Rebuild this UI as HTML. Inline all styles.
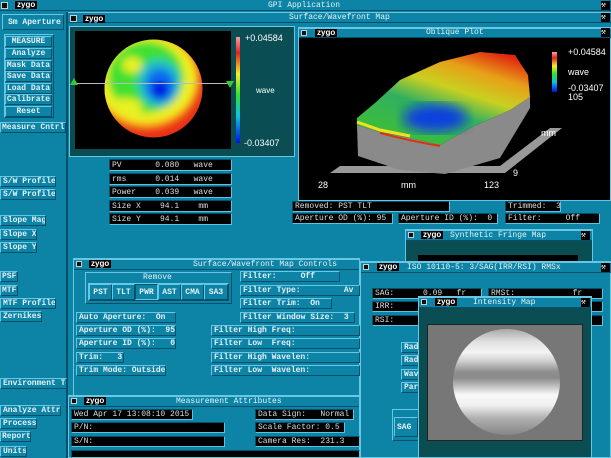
<!DOCTYPE html>
<html><head><meta charset="utf-8"><style>
*{margin:0;padding:0;box-sizing:border-box}
body{width:611px;height:458px;overflow:hidden;background:#0d84a6;font-family:"Liberation Mono",monospace;font-size:8px;color:#e6f2f6;position:relative}
div{position:absolute}
.b{border:1px solid;border-color:#66c8e4 #04506a #04506a #66c8e4;background:#0d84a6;white-space:pre;padding-left:2px;font-weight:bold;overflow:hidden;display:flex;align-items:center}
.c{justify-content:center;padding:0}
.f{background:#000;color:#ddd;border:1px solid;border-color:#04506a #5cc3e0 #5cc3e0 #04506a;white-space:pre;padding-left:2px;overflow:hidden;display:flex;align-items:center}
.t{height:11px;background:#0d84a6;border-top:1px solid #66c8e4;border-bottom:1px solid #04506a;white-space:pre;line-height:9px}
.z{background:#000;color:#fff;font-family:"Liberation Sans",sans-serif;font-weight:bold;font-size:8px;line-height:8px;padding:0 2px;height:8px;top:1px}
.x{width:7px;height:7px;background:#111;border:1px solid #ccc;top:2px}
.w{border:1px solid;border-color:#66c8e4 #04506a #04506a #66c8e4}
.s{color:#fff;font-family:"Liberation Sans",sans-serif;font-size:9px;white-space:pre}
.k{width:9px;height:9px;background:#000;color:#fff;font-size:8px;line-height:9px}
</style></head><body>
<!-- top bar -->
<div class="t" style="left:0;top:0;width:611px;border-top:none"></div>
<div class="x" style="left:1px"></div><div class="z" style="left:15px">zygo</div>
<div style="left:268px;top:1px;white-space:pre">GPI Application</div>
<div class="k" style="left:601px;top:1px">⚒</div>

<!-- left column -->
<div style="left:66px;top:12px;width:2px;height:446px;background:#04506a"></div>
<div class="b" style="left:2px;top:14px;width:62px;height:16px;padding-left:5px">Sm Aperture</div>
<div class="w" style="left:4px;top:34px;width:50px;height:84px"></div>
<div class="b c" style="left:5px;top:36px;width:47px;height:11px">MEASURE</div>
<div class="b c" style="left:5px;top:48px;width:47px;height:11px">Analyze</div>
<div class="b c" style="left:5px;top:60px;width:47px;height:11px">Mask Data</div>
<div class="b c" style="left:5px;top:71px;width:47px;height:11px">Save Data</div>
<div class="b c" style="left:5px;top:83px;width:47px;height:11px">Load Data</div>
<div class="b c" style="left:5px;top:94px;width:47px;height:11px">Calibrate</div>
<div class="b c" style="left:5px;top:106px;width:47px;height:11px">Reset</div>
<div class="b" style="left:0;top:122px;width:66px;height:11px;padding-left:1px">Measure Cntrl</div>
<div class="b" style="left:0;top:176px;width:56px;height:11px">S/W Profile</div>
<div class="b" style="left:0;top:189px;width:56px;height:11px">S/W Profile</div>
<div class="b" style="left:0;top:215px;width:46px;height:11px">Slope Mag</div>
<div class="b" style="left:0;top:229px;width:37px;height:11px">Slope X</div>
<div class="b" style="left:0;top:242px;width:37px;height:11px">Slope Y</div>
<div class="b" style="left:0;top:271px;width:18px;height:11px;padding-left:1px">PSF</div>
<div class="b" style="left:0;top:285px;width:18px;height:11px;padding-left:1px">MTF</div>
<div class="b" style="left:0;top:298px;width:56px;height:11px">MTF Profile</div>
<div class="b" style="left:0;top:311px;width:42px;height:11px">Zernikes</div>
<div class="b" style="left:0;top:378px;width:67px;height:11px">Environment Te</div>
<div class="b" style="left:0;top:405px;width:61px;height:11px">Analyze Attr</div>
<div class="b" style="left:0;top:418px;width:37px;height:11px">Process</div>
<div class="b" style="left:0;top:431px;width:31px;height:11px;padding-left:1px">Report</div>
<div class="b" style="left:0;top:446px;width:27px;height:11px">Units</div>

<!-- surface/wavefront map window -->
<div class="t" style="left:68px;top:12px;width:543px"></div>
<div class="x" style="left:70px;top:15px"></div><div class="z" style="left:83px;top:15px">zygo</div>
<div style="left:289px;top:13px;white-space:pre">Surface/Wavefront Map</div>
<div class="k" style="left:601px;top:13px">⚒</div>
<div style="left:69px;top:26px;width:226px;height:131px;background:#0a4e54;border:1px solid #66c8e4"></div>
<div style="left:75px;top:31px;width:156px;height:118px;background:#000"></div>
<svg style="position:absolute;left:104px;top:39px" width="99" height="99">
<defs><clipPath id="c"><circle cx="49.5" cy="49.5" r="49"/></clipPath><filter id="bl"><feGaussianBlur stdDeviation="4"/></filter></defs>
<g clip-path="url(#c)">
<rect width="99" height="99" fill="#e83018"/>
<g filter="url(#bl)">
<ellipse cx="42" cy="40" rx="54" ry="50" fill="#f8a018"/>
<ellipse cx="42" cy="40" rx="50" ry="44" fill="#f0f020"/>
<ellipse cx="42" cy="38" rx="38" ry="36" fill="#40e030"/>
<ellipse cx="22" cy="68" rx="16" ry="9" fill="#e8f020"/>
<ellipse cx="28" cy="26" rx="10" ry="8" fill="#e8f020"/>
<ellipse cx="55" cy="44" rx="22" ry="24" fill="#20c0c0"/>
<ellipse cx="56" cy="46" rx="15" ry="17" fill="#1070f0"/>
<ellipse cx="56" cy="50" rx="8" ry="9" fill="#0010e0"/>
</g></g></svg>
<div style="left:74px;top:83px;width:157px;height:1px;background:#bbb"></div>
<div style="left:70px;top:78px;width:0;height:0;border-left:4px solid transparent;border-right:4px solid transparent;border-bottom:7px solid #3c3"></div>
<div style="left:226px;top:81px;width:0;height:0;border-left:4px solid transparent;border-right:4px solid transparent;border-top:7px solid #3c3"></div>
<div style="left:236px;top:37px;width:4px;height:106px;background:linear-gradient(#f8a0a0,#e82020 15%,#f8f020 35%,#30e030 55%,#10c0e0 75%,#0010e8)"></div>
<div class="s" style="left:245px;top:33px">+0.04584</div>
<div class="s" style="left:256px;top:86px;font-size:8px">wave</div>
<div class="s" style="left:244px;top:138px">-0.03407</div>
<div class="f" style="left:109px;top:159px;width:123px;height:12px">PV       0.080   wave</div>
<div class="f" style="left:109px;top:173px;width:123px;height:12px">rms      0.014   wave</div>
<div class="f" style="left:109px;top:186px;width:123px;height:12px">Power    0.039   wave</div>
<div class="f" style="left:109px;top:200px;width:123px;height:12px">Size X    94.1    mm</div>
<div class="f" style="left:109px;top:213px;width:123px;height:12px">Size Y    94.1    mm</div>

<!-- oblique plot -->
<div style="left:298px;top:27px;width:313px;height:174px;border:1px solid #66c8e4;background:#000"></div>
<div class="t" style="left:299px;top:28px;width:312px;height:10px"></div>
<div class="x" style="left:301px;top:30px;width:6px;height:6px"></div><div class="z" style="left:315px;top:29px">zygo</div>
<div style="left:426px;top:28px;white-space:pre">Oblique Plot</div>
<div class="k" style="left:601px;top:28px">⚒</div>
<svg style="position:absolute;left:300px;top:38px" width="311" height="162">
<defs><linearGradient id="g" x1="0.2" y1="1" x2="0.8" y2="0"><stop offset="0" stop-color="#40c030"/><stop offset="0.4" stop-color="#30b060"/><stop offset="0.6" stop-color="#c8d020"/><stop offset="0.8" stop-color="#e8a018"/><stop offset="1" stop-color="#e02810"/></linearGradient>
<filter id="b2"><feGaussianBlur stdDeviation="6"/></filter></defs>
<polygon points="30,135 205,135 262,90 250,90 200,128 40,128" fill="#999"/>
<polygon points="57,87 58,118 100,132 145,136 200,120 230,70 230,59 210,72 170,90 140,107 110,100 80,94" fill="#8a8a8a"/>
<polygon points="57,80 75,65 100,42 140,24 180,14 215,17 228,37 230,59 210,72 170,90 140,107 110,100 80,94 57,87" fill="url(#g)"/>
<ellipse cx="135" cy="80" rx="32" ry="14" fill="#1040e0" filter="url(#b2)"/>
<path d="M57,84 L80,92 110,98" stroke="#f0e020" stroke-width="3" fill="none"/>
<path d="M80,95 Q110,103 140,108" stroke="#e03010" stroke-width="2" fill="none"/>
</svg>
<div style="left:552px;top:52px;width:5px;height:40px;background:linear-gradient(#f8a0a0,#e82020 15%,#f8f020 35%,#30e030 55%,#10c0e0 75%,#0010e8)"></div>
<div class="s" style="left:568px;top:47px">+0.04584</div>
<div class="s" style="left:568px;top:67px">wave</div>
<div class="s" style="left:568px;top:83px">-0.03407</div>
<div class="s" style="left:568px;top:92px">105</div>
<div class="s" style="left:541px;top:128px">mm</div>
<div class="s" style="left:513px;top:168px">9</div>
<div class="s" style="left:318px;top:180px">28</div>
<div class="s" style="left:401px;top:180px">mm</div>
<div class="s" style="left:484px;top:180px">123</div>
<div class="f" style="left:292px;top:201px;width:158px;height:11px">Removed: PST TLT</div>
<div class="f" style="left:505px;top:201px;width:56px;height:11px">Trimmed:  3</div>
<div class="f" style="left:292px;top:213px;width:101px;height:11px">Aperture OD (%): 95</div>
<div class="f" style="left:398px;top:213px;width:100px;height:11px">Aperture ID (%):  0</div>
<div class="f" style="left:505px;top:213px;width:95px;height:11px">Filter:     Off</div>

<!-- synthetic fringe -->
<div style="left:405px;top:229px;width:188px;height:40px;background:#0a4e54;border:1px solid #66c8e4"></div>
<div class="t" style="left:406px;top:230px;width:186px;height:11px"></div>
<div class="x" style="left:408px;top:232px;width:6px;height:6px"></div><div class="z" style="left:421px;top:231px">zygo</div>
<div style="left:450px;top:231px;white-space:pre">Synthetic Fringe Map</div>
<div class="k" style="left:581px;top:231px">⚒</div>
<div style="left:418px;top:255px;width:160px;height:8px;background:#000"></div>

<!-- ISO window -->
<div style="left:360px;top:261px;width:251px;height:197px;background:#0d84a6;border:1px solid #66c8e4"></div>
<div class="t" style="left:361px;top:262px;width:250px;height:11px"></div>
<div class="x" style="left:363px;top:264px;width:6px;height:6px"></div><div class="z" style="left:377px;top:263px">zygo</div>
<div style="left:407px;top:263px;white-space:pre">ISO 10110-5: 3/SAG(IRR/RSI) RMSx</div>
<div class="k" style="left:601px;top:263px">⚒</div>
<div class="f" style="left:372px;top:288px;width:110px;height:11px">SAG:      0.09   fr</div>
<div class="f" style="left:488px;top:288px;width:115px;height:11px">RMSt:            fr</div>
<div class="f" style="left:372px;top:301px;width:110px;height:11px">IRR:</div>
<div class="f" style="left:488px;top:301px;width:115px;height:11px"></div>
<div class="f" style="left:372px;top:315px;width:110px;height:11px">RSI:</div>
<div class="f" style="left:488px;top:315px;width:115px;height:11px"></div>
<div class="b" style="left:401px;top:342px;width:20px;height:11px">Rad</div>
<div class="b" style="left:401px;top:355px;width:20px;height:11px">Rad</div>
<div class="b" style="left:401px;top:369px;width:20px;height:11px">Wav</div>
<div class="b" style="left:401px;top:382px;width:20px;height:11px">Par</div>
<div class="w" style="left:392px;top:409px;width:30px;height:32px"></div>
<div class="b" style="left:394px;top:417px;width:24px;height:20px">SAG</div>

<!-- intensity map -->
<div style="left:418px;top:296px;width:174px;height:162px;background:#0a4e54;border:1px solid #66c8e4"></div>
<div class="t" style="left:419px;top:297px;width:172px;height:11px"></div>
<div class="x" style="left:421px;top:299px;width:6px;height:6px"></div><div class="z" style="left:435px;top:298px">zygo</div>
<div style="left:473px;top:298px;white-space:pre">Intensity Map</div>
<div class="k" style="left:581px;top:298px">⚒</div>
<div style="left:427px;top:324px;width:156px;height:117px;background:#777;border:1px solid #222"></div>
<div style="left:453px;top:329px;width:107px;height:106px;border-radius:50%;background:linear-gradient(#a8a8a8 0%,#e0e0e0 12%,#f4f4f4 22%,#d0d0d0 30%,#909090 40%,#8a8a8a 46%,#c0c0c0 54%,#f8f8f8 62%,#f0f0f0 72%,#b0b0b0 84%,#858585 100%)"></div>

<!-- controls window -->
<div style="left:73px;top:258px;width:287px;height:138px;background:#0d84a6;border:1px solid #66c8e4"></div>
<div class="t" style="left:74px;top:259px;width:285px;height:11px"></div>
<div class="x" style="left:76px;top:261px;width:6px;height:6px"></div><div class="z" style="left:89px;top:260px">zygo</div>
<div style="left:193px;top:260px;white-space:pre">Surface/Wavefront Map Controls</div>
<div class="w" style="left:85px;top:272px;width:147px;height:32px"></div>
<div style="left:143px;top:273px">Remove</div>
<div class="w" style="left:88px;top:283px;width:141px;height:18px"></div>
<div class="b c" style="left:89px;top:284px;width:23px;height:16px">PST</div>
<div class="b c" style="left:112px;top:284px;width:23px;height:16px">TLT</div>
<div class="b c" style="left:135px;top:284px;width:23px;height:16px;border-color:#04506a #66c8e4 #66c8e4 #04506a">PWR</div>
<div class="b c" style="left:158px;top:284px;width:23px;height:16px">AST</div>
<div class="b c" style="left:181px;top:284px;width:23px;height:16px">CMA</div>
<div class="b c" style="left:204px;top:284px;width:24px;height:16px">SA3</div>
<div class="b" style="left:76px;top:312px;width:100px;height:11px">Auto Aperture:  On</div>
<div class="b" style="left:76px;top:325px;width:100px;height:11px">Aperture OD (%):  95</div>
<div class="b" style="left:76px;top:338px;width:100px;height:11px">Aperture ID (%):   0</div>
<div class="b" style="left:76px;top:352px;width:48px;height:11px">Trim:   3</div>
<div class="b" style="left:76px;top:365px;width:90px;height:11px">Trim Mode: Outside</div>
<div class="b" style="left:240px;top:271px;width:100px;height:11px">Filter:     Off</div>
<div class="b" style="left:240px;top:285px;width:120px;height:11px">Filter Type:         Av</div>
<div class="b" style="left:240px;top:298px;width:92px;height:11px">Filter Trim:  On</div>
<div class="b" style="left:240px;top:312px;width:115px;height:11px">Filter Window Size:  3</div>
<div class="b" style="left:211px;top:325px;width:149px;height:11px">Filter High Freq:</div>
<div class="b" style="left:211px;top:338px;width:149px;height:11px">Filter Low  Freq:</div>
<div class="b" style="left:211px;top:352px;width:149px;height:11px">Filter High Wavelen:</div>
<div class="b" style="left:211px;top:365px;width:149px;height:11px">Filter Low  Wavelen:</div>

<!-- measurement attributes -->
<div style="left:68px;top:395px;width:292px;height:63px;background:#0d84a6;border:1px solid #66c8e4"></div>
<div class="t" style="left:69px;top:396px;width:290px;height:11px"></div>
<div class="x" style="left:71px;top:398px;width:6px;height:6px"></div><div class="z" style="left:84px;top:397px">zygo</div>
<div style="left:176px;top:397px;white-space:pre">Measurement Attributes</div>
<div class="f" style="left:71px;top:409px;width:122px;height:11px">Wed Apr 17 13:08:10 2015</div>
<div class="f" style="left:71px;top:422px;width:154px;height:11px">P/N:</div>
<div class="f" style="left:71px;top:436px;width:154px;height:11px">S/N:</div>
<div class="f" style="left:71px;top:450px;width:289px;height:8px"></div>
<div class="f" style="left:255px;top:409px;width:99px;height:11px">Data Sign:   Normal</div>
<div class="f" style="left:255px;top:422px;width:90px;height:11px">Scale Factor: 0.5</div>
<div class="f" style="left:255px;top:436px;width:105px;height:11px">Camera Res:  231.3</div>
</body></html>
